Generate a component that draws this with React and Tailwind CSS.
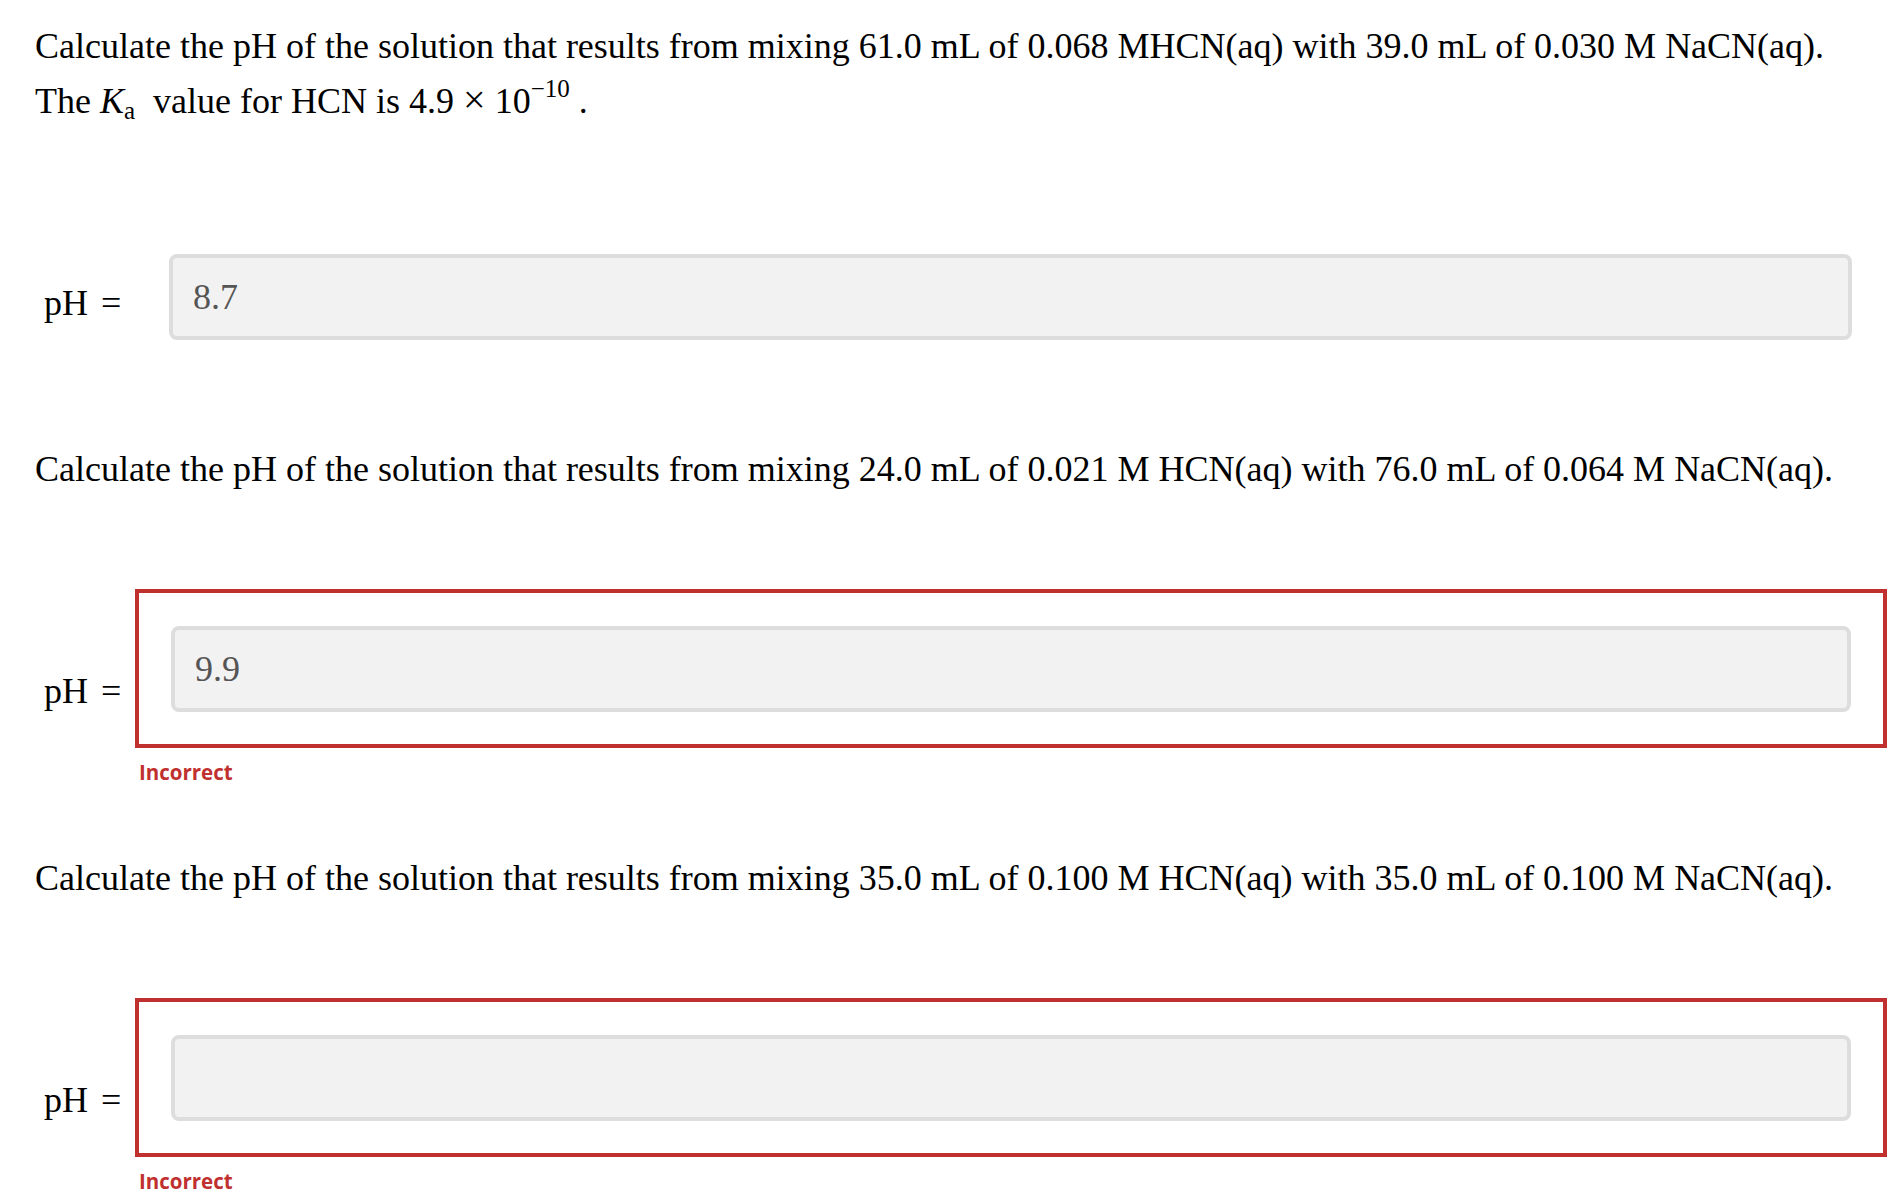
import React from 'react'

const serif = { fontFamily: '"Liberation Serif", "Times New Roman", serif' }

function Question({ children, className = '' }) {
  return (
    <div className={`text-[36px] leading-[55px] text-black ${className}`} style={serif}>
      {children}
    </div>
  )
}

function PhLabel({ className = '' }) {
  return (
    <div className={`w-[100px] shrink-0 pl-[9px] text-[36px] leading-none text-black ${className}`} style={serif}>
      pH<span className="ml-[13px]">=</span>
    </div>
  )
}

function AnswerInput({ value }) {
  return (
    <div
      className="h-[86px] w-full rounded-[8px] border-[4px] border-[#dddddd] bg-[#f2f2f2] px-[20px] flex items-center text-[36px] text-[#555555]"
      style={serif}
    >
      {value}
    </div>
  )
}

function IncorrectRow({ value }) {
  return (
    <div>
      <div className="flex items-start">
        <PhLabel className="mt-[84px]" />
        <div className="w-[1752px] border-[4px] border-[#c0302f] pl-[32px] pr-[32px] pt-[33px] pb-[32px]">
          <AnswerInput value={value} />
        </div>
      </div>
      <div
        className="ml-[104px] mt-[14px] text-[20.5px] leading-[21px] font-bold text-[#c0302f]"
        style={{ fontFamily: '"Open Sans", "Liberation Sans", sans-serif' }}
      >
        Incorrect
      </div>
    </div>
  )
}

export default function App() {
  return (
    <div className="h-[1190px] overflow-hidden bg-white pl-[35px] pt-[19px]">
      {/* Part 1 */}
      <Question>
        <div>
          Calculate the pH of the solution that results from mixing 61.0 mL of 0.068 MHCN(aq) with 39.0 mL of 0.030 M NaCN(aq).
        </div>
        <div>
          The <i>K</i>
          <span className="relative top-[6px] text-[25px] leading-none">a</span>
          &nbsp; value for HCN is 4.9 <span className="text-[40px] leading-none">×</span> 10
          <span className="relative -top-[16px] text-[25px] leading-none">−10</span>
          &nbsp;.
        </div>
      </Question>

      <div className="mt-[125px] flex items-start">
        <PhLabel className="mt-[31px]" />
        <div className="w-[1752px] pl-[34px] pr-[35px]">
          <AnswerInput value="8.7" />
        </div>
      </div>

      {/* Part 2 */}
      <Question className="mt-[102px]">
        Calculate the pH of the solution that results from mixing 24.0 mL of 0.021 M HCN(aq) with 76.0 mL of 0.064 M NaCN(aq).
      </Question>

      <div className="mt-[92px]">
        <IncorrectRow value="9.9" />
      </div>

      {/* Part 3 */}
      <Question className="mt-[68px]">
        Calculate the pH of the solution that results from mixing 35.0 mL of 0.100 M HCN(aq) with 35.0 mL of 0.100 M NaCN(aq).
      </Question>

      <div className="mt-[92px]">
        <IncorrectRow value="" />
      </div>
    </div>
  )
}
